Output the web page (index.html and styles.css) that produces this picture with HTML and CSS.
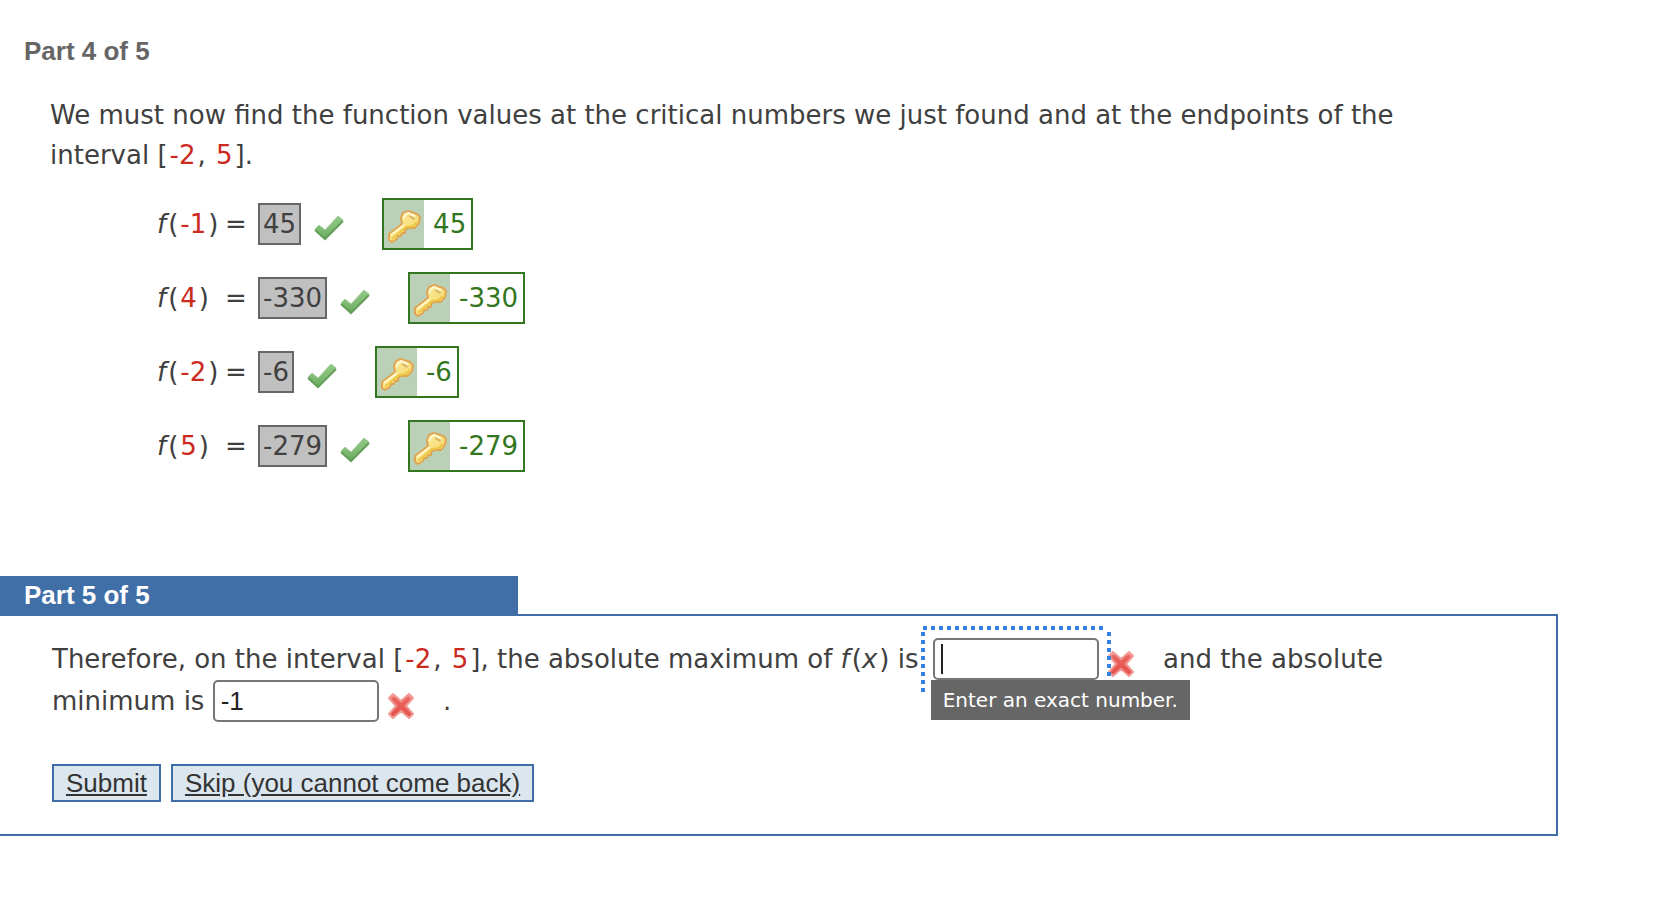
FILE: index.html
```html
<!DOCTYPE html>
<html lang="en">
<head>
    <meta charset="UTF-8">
    <meta name="viewport" content="width=device-width, initial-scale=1.0">
    <title>Part 5 of 5</title>
    <link rel="stylesheet" href="styles.css">
</head>
<body>
    <!-- Shared icons -->
    <svg class="icon-defs" width="0" height="0" aria-hidden="true">
        <defs>
            <linearGradient id="greenFill" x1="0" y1="0" x2="0" y2="1">
                <stop offset="0" stop-color="#8fc886"/>
                <stop offset="0.5" stop-color="#83bd77"/>
                <stop offset="1" stop-color="#6aa95e"/>
            </linearGradient>
            <linearGradient id="redFill" x1="0" y1="0" x2="0" y2="1">
                <stop offset="0" stop-color="#f29490"/>
                <stop offset="1" stop-color="#de4641"/>
            </linearGradient>
            <linearGradient id="goldFill" x1="0" y1="0" x2="1" y2="1">
                <stop offset="0" stop-color="#fff3ac"/>
                <stop offset="1" stop-color="#f2cf5a"/>
            </linearGradient>
            <symbol id="check" viewBox="0 0 32 28">
                <path d="M2 15 L6 11 L12 16 L25 2 L30 6 L12 25 Z" fill="url(#greenFill)" stroke="#a5d19d" stroke-width="1" stroke-linejoin="round"/>
                <path d="M2 16 L12 25 L30 7" fill="none" stroke="#629e57" stroke-width="2"/>
            </symbol>
            <symbol id="cross" viewBox="0 0 28 28">
                <path d="M6 2 L14 9 L22 2 L26 6 L19 14 L26 22 L22 26 L14 19 L6 26 L2 22 L9 14 L2 6 Z" fill="url(#redFill)" stroke="#f19a96" stroke-width="2" stroke-linejoin="round"/>
                <path d="M7 7 L21 21 M21 7 L7 21" stroke="#ea5550" stroke-width="4" stroke-linecap="round" opacity="0.7"/>
            </symbol>
            <symbol id="key" viewBox="0 0 34 34">
                <path d="M14 9 L16 4 L21 2 L30 5 L33 8 L32 14 L28 19 L21 19 L18 21 L18 24 L15 24 L14 27 L11 27 L10 30 L5 33 L2 31 L2 25 L15 15 Z" fill="url(#goldFill)" stroke="#dfa552" stroke-width="2" stroke-linejoin="round"/>
                <path d="M16 10 L18 6 L21 4 L28 7 M4 26 L17 16" fill="none" stroke="#fff8d0" stroke-width="2"/>
                <path d="M5 30 L19 18 L26 17 L30 13" fill="none" stroke="#edc744" stroke-width="2"/>
                <path d="M22 6 L28 9 L27 11 L22 8 Z" fill="#d9b56c"/>
            </symbol>
        </defs>
    </svg>

    <section class="part">
        <h2 class="part-title">Part 4 of 5</h2>
        <div class="part-body">
            <p class="prompt">We must now find the function values at the critical numbers we just found and at the endpoints of the interval [<span class="num">-2</span>, <span class="num">5</span>].</p>

            <div class="values">
                <div class="value-row">
                    <span class="fn"><i>f</i>(<span class="num">-1</span>)</span>
                    <span class="equals">=</span>
                    <span class="response">45</span>
                    <svg class="check" role="img" aria-label="Correct"><use href="#check"/></svg>
                    <span class="answer-key"><span class="key-cell"><svg class="key" aria-hidden="true"><use href="#key"/></svg></span><span class="key-value">45</span></span>
                </div>
                <div class="value-row">
                    <span class="fn"><i>f</i>(<span class="num">4</span>)</span>
                    <span class="equals">=</span>
                    <span class="response">-330</span>
                    <svg class="check" role="img" aria-label="Correct"><use href="#check"/></svg>
                    <span class="answer-key"><span class="key-cell"><svg class="key" aria-hidden="true"><use href="#key"/></svg></span><span class="key-value">-330</span></span>
                </div>
                <div class="value-row">
                    <span class="fn"><i>f</i>(<span class="num">-2</span>)</span>
                    <span class="equals">=</span>
                    <span class="response">-6</span>
                    <svg class="check" role="img" aria-label="Correct"><use href="#check"/></svg>
                    <span class="answer-key"><span class="key-cell"><svg class="key" aria-hidden="true"><use href="#key"/></svg></span><span class="key-value">-6</span></span>
                </div>
                <div class="value-row">
                    <span class="fn"><i>f</i>(<span class="num">5</span>)</span>
                    <span class="equals">=</span>
                    <span class="response">-279</span>
                    <svg class="check" role="img" aria-label="Correct"><use href="#check"/></svg>
                    <span class="answer-key"><span class="key-cell"><svg class="key" aria-hidden="true"><use href="#key"/></svg></span><span class="key-value">-279</span></span>
                </div>
            </div>
        </div>
    </section>

    <section class="part part-current">
        <h2 class="part-title">Part 5 of 5</h2>
        <form class="part-box">
            <p class="prompt"><label for="maximum">Therefore, on the interval [<span class="num">-2</span>, <span class="num">5</span>], the absolute maximum of <i>f</i>(<i>x</i>) is</label>
                <span class="field"><span class="focus-dots"></span><input type="text" id="maximum" class="answer active" aria-describedby="hint"><span class="tooltip" id="hint" role="tooltip">Enter an exact number.</span></span><svg class="cross" role="img" aria-label="Incorrect"><use href="#cross"/></svg>
                <label for="minimum">and the absolute minimum is</label>
                <input type="text" id="minimum" class="answer" value="-1"><svg class="cross" role="img" aria-label="Incorrect"><use href="#cross"/></svg> .</p>
            <div class="actions">
                <button type="submit">Submit</button>
                <button type="button">Skip (you cannot come back)</button>
            </div>
        </form>
    </section>
</body>
</html>
```
FILE: styles.css
```css
/* General Styles */
* {
    box-sizing: border-box;
}

body {
    font-family: Verdana, "DejaVu Sans", sans-serif;
    font-size: 26px;
    line-height: 40px;
    background-color: #fff;
    color: #404040;
    margin: 0;
    padding: 32px 100px 32px 0;
}

.icon-defs {
    position: absolute;
}

.num {
    color: #cc2a1e;
    padding: 0 2px;
}

i {
    padding-right: 2px;
}

/* Part headings */
.part-title {
    font-family: Arial, "Liberation Sans", sans-serif;
    font-size: 26px;
    line-height: 38px;
    color: #666;
    margin: 0;
    padding-left: 24px;
}

.part-body {
    padding: 25px 60px 0 50px;
}

.prompt {
    margin: 0;
}

/* Function values */
.values {
    display: flex;
    flex-direction: column;
    gap: 22px;
    padding: 23px 0 0 107px;
}

.value-row {
    display: flex;
    align-items: center;
    height: 52px;
}

.fn {
    width: 68px;
}

.equals {
    width: 33px;
}

.response {
    background: #c0c0c0;
    border: 2px solid #666;
    line-height: 38px;
    padding: 0 3px;
}

.check {
    width: 32px;
    height: 28px;
    margin: 8px 37px 0 12px;
}

.answer-key {
    display: flex;
    border: 2px solid #327620;
    color: #327620;
    line-height: 48px;
}

.key-cell {
    display: flex;
    align-items: center;
    justify-content: center;
    width: 40px;
    padding-top: 4px;
    background: #bad1b7;
}

.key {
    width: 34px;
    height: 34px;
}

.key-value {
    padding: 0 5px 0 9px;
}

/* Current part */
.part-current {
    margin-top: 104px;
}

.part-current .part-title {
    width: 518px;
    background: #406fa8;
    color: #fff;
}

.part-box {
    border: 2px solid #406fa8;
    border-left: none;
    padding: 22px 60px 32px 52px;
}

.field {
    position: relative;
    display: inline-block;
    margin-left: 6px;
}

.answer {
    width: 166px;
    height: 42px;
    border: 2px solid #767676;
    border-radius: 5px;
    padding: 0 6px;
    font-family: Arial, "Liberation Sans", sans-serif;
    font-size: 26px;
    color: #222;
    background: #fff;
}

/* Text cursor in the active field */
.answer.active {
    background: linear-gradient(#222, #222) 6px 4px / 2px 30px no-repeat #fff;
}

.focus-dots {
    position: absolute;
    top: -12px;
    left: -12px;
    width: 190px;
    height: 66px;
    pointer-events: none;
    background:
        repeating-linear-gradient(to right, #347fdf 0 4px, transparent 4px 8px) 2px 0 / 184px 4px no-repeat,
        repeating-linear-gradient(to bottom, #347fdf 0 4px, transparent 4px 8px) 0 6px / 4px 60px no-repeat,
        repeating-linear-gradient(to bottom, #347fdf 0 4px, transparent 4px 8px) 186px 6px / 4px 44px no-repeat;
}

.tooltip {
    position: absolute;
    top: 42px;
    left: -2px;
    z-index: 1;
    padding: 0 12px;
    background: #666;
    color: #fff;
    font-size: 20px;
    line-height: 40px;
    white-space: nowrap;
}

.cross {
    width: 28px;
    height: 28px;
    margin: 0 20px 0 8px;
    vertical-align: -10px;
}

/* Buttons */
.actions {
    display: flex;
    gap: 10px;
    margin-top: 42px;
}

button {
    font-family: Arial, "Liberation Sans", sans-serif;
    font-size: 26px;
    line-height: 34px;
    color: #333;
    text-decoration: underline;
    background: #dce6ef;
    border: 2px solid #406fa8;
    padding: 0 12px;
    cursor: pointer;
}
```
